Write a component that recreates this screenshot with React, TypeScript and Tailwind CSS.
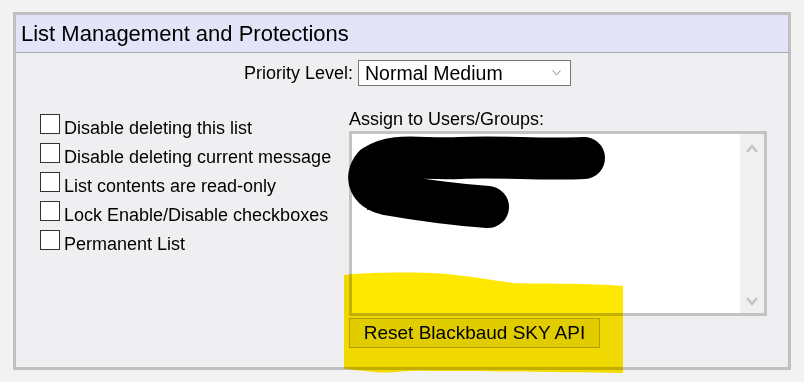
import React from "react";

const options = [
  "Disable deleting this list",
  "Disable deleting current message",
  "List contents are read-only",
  "Lock Enable/Disable checkboxes",
  "Permanent List",
];

const Chevron = ({ up }: { up?: boolean }) => (
  <svg width="12" height="9" viewBox="0 0 12 9">
    <path
      d={up ? "M1 8 L6 2 L11 8" : "M1 1 L6 7 L11 1"}
      fill="none"
      stroke="#c3c3c3"
      strokeWidth="2.4"
    />
  </svg>
);

export default function App() {
  return (
    <div className="relative w-[804px] h-[382px] bg-[#f2f2f2] pt-[12px] pl-[13px] font-['Liberation_Sans',Arial,sans-serif] text-black overflow-hidden">
      <div className="w-[778px] h-[358px] border-[3px] border-[#c0c0c0] bg-[#efeff1] flex flex-col">
        <div className="h-[38px] bg-[#e4e4f8] border-b border-[#a8a8b4] pl-[5px] text-[22px] leading-[37px]">
          List Management and Protections
        </div>

        <div className="flex justify-center items-center gap-[5px] mt-[7px] h-[26px] pl-[11px]">
          <span className="text-[18px] leading-[26px]">Priority Level:</span>
          <div className="w-[213px] h-[26px] bg-white border border-[#767676] flex items-center justify-between pl-[6px] pr-[9px]">
            <span className="text-[19.5px] leading-[24px]">Normal Medium</span>
            <svg width="9" height="6" viewBox="0 0 9 6">
              <path d="M0.5 0.5 L4.5 5 L8.5 0.5" fill="none" stroke="#8a8a8a" strokeWidth="1" />
            </svg>
          </div>
        </div>

        <div className="flex">
          <div className="w-[333px] pl-[24px] pt-[28px] flex flex-col">
            {options.map((o) => (
              <div key={o} className="flex gap-[4px] h-[29px]">
                <span className="w-[20px] h-[20px] bg-white border border-[#333]" />
                <span className="text-[18px] leading-[20px] mt-[4px]">{o}</span>
              </div>
            ))}
          </div>

          <div className="pt-[23px] flex flex-col">
            <div className="text-[18px] leading-[21px]">Assign to Users/Groups:</div>
            <div className="mt-[1px] w-[418px] h-[185px] border-[3px] border-[#c3c3c3] bg-white flex">
              <div className="flex-1 pl-[15px] pt-[63px]">
                <span className="block w-[13px] h-[13px] border border-[#333]" />
              </div>
              <div className="w-[24px] bg-[#f0f0f0] flex flex-col items-center justify-between pt-[10px] pb-[7px]">
                <Chevron up />
                <Chevron />
              </div>
            </div>
            <button className="mt-[2px] w-[251px] h-[30px] bg-[#e1e1e1] border border-[#adadad] text-[19px] leading-[28px] text-center">
              Reset Blackbaud SKY API
            </button>
          </div>
        </div>
      </div>

      <svg className="absolute inset-0 pointer-events-none" width="804" height="382" viewBox="0 0 804 382">
        <path
          d="M344 275 C360 273 400 272 430 273 C460 274 490 280 513 283 C540 284 590 283 623 286 L623 373 C560 372 480 371 430 371 C405 370 390 374 375 372 C360 371 350 369 344 369 Z"
          fill="#ffe800"
          style={{ mixBlendMode: "multiply" }}
        />
        <path
          d="M584 158 C540 160 500 156 460 158 C420 160 395 152 374 166 C364 178 370 190 386 194 C420 200 460 205 488 207"
          fill="none"
          stroke="#000"
          strokeWidth="42"
          strokeLinecap="round"
          strokeLinejoin="round"
        />
      </svg>
    </div>
  );
}
